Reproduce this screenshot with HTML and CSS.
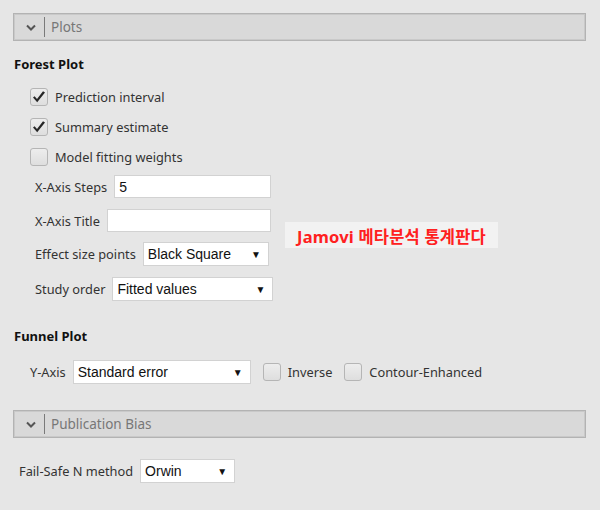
FILE: index.html
```html
<!DOCTYPE html>
<html>
<head>
<meta charset="utf-8">
<link rel="stylesheet" href="styles.css">
</head>
<body>
<div class="header">
  <svg class="chev" width="10" height="7" viewBox="0 0 10 7"><path d="M1 1.5 L5 5.5 L9 1.5" fill="none" stroke="#555" stroke-width="2"/></svg>
  <span class="sep"></span>
  <span class="htitle">Plots</span>
</div>

<div class="stitle first">Forest Plot</div>

<div class="cbrow">
  <span class="cb"><svg width="14" height="14" viewBox="0 0 14 14"><path d="M1 7.6 L5.2 12.2 L13 2.6 L11 1.2 L5 9 L2.6 6.2 Z" fill="#262626"/></svg></span>
  <span class="cblabel">Prediction interval</span>
</div>
<div class="cbrow">
  <span class="cb"><svg width="14" height="14" viewBox="0 0 14 14"><path d="M1 7.6 L5.2 12.2 L13 2.6 L11 1.2 L5 9 L2.6 6.2 Z" fill="#262626"/></svg></span>
  <span class="cblabel">Summary estimate</span>
</div>
<div class="cbrow">
  <span class="cb"></span>
  <span class="cblabel">Model fitting weights</span>
</div>

<div class="frow r1">
  <span class="flabel">X-Axis Steps</span>
  <span class="tinput w-steps">5</span>
</div>
<div class="frow r2">
  <span class="flabel">X-Axis Title</span>
  <span class="tinput w-title"></span>
</div>
<div class="frow r3">
  <span class="flabel">Effect size points</span>
  <span class="sel w-effect">Black Square<span class="arrow">▼</span></span>
</div>
<div class="frow r4">
  <span class="flabel">Study order</span>
  <span class="sel w-order">Fitted values<span class="arrow">▼</span></span>
</div>

<div class="stitle funnel">Funnel Plot</div>

<div class="yrow">
  <span class="flabel">Y-Axis</span>
  <span class="sel w-yaxis">Standard error<span class="arrow">▼</span></span>
  <span class="cb cb-inline"></span>
  <span class="cblabel">Inverse</span>
  <span class="cb cb-inline"></span>
  <span class="cblabel">Contour-Enhanced</span>
</div>

<div class="header header2">
  <svg class="chev" width="10" height="7" viewBox="0 0 10 7"><path d="M1 1.5 L5 5.5 L9 1.5" fill="none" stroke="#555" stroke-width="2"/></svg>
  <span class="sep"></span>
  <span class="htitle">Publication Bias</span>
</div>

<div class="fsrow">
  <span class="flabel">Fail-Safe N method</span>
  <span class="sel w-fs">Orwin<span class="arrow">▼</span></span>
</div>

<div class="watermark">Jamovi 메타분석 통계판다</div>
</body>
</html>
```

FILE: styles.css
```css
html, body {
  margin: 0;
  padding: 0;
}
body {
  background: #e6e6e6;
  width: 600px;
  height: 510px;
  overflow: hidden;
  position: relative;
  font-family: "Noto Sans", "Open Sans", sans-serif;
  font-size: 12.8px;
  color: #333;
  padding-top: 13px;
  box-sizing: border-box;
}
.header {
  margin: 0 14px 0 13px;
  height: 28px;
  box-sizing: border-box;
  border: 1px solid #b3b3b3;
  box-shadow: inset 0 0 0 1px #c9c9c9;
  background: #d9d9d9;
  display: flex;
  align-items: center;
}
.chev {
  margin-left: 12px;
  display: block;
}
.sep {
  width: 1px;
  height: 20px;
  background: #7a7a7a;
  margin-left: 8px;
}
.htitle {
  margin-left: 6px;
  color: #777;
  font-size: 13.5px;
}
.stitle {
  font-weight: bold;
  color: #111;
  margin-left: 14px;
  line-height: 20px;
  font-size: 13px;
}
.stitle.first { margin-top: 13px; }
.cbrow {
  display: flex;
  align-items: center;
  height: 30px;
  padding-left: 30px;
}
.stitle.first + .cbrow { margin-top: 8px; }
.cb {
  width: 18px;
  height: 18px;
  box-sizing: border-box;
  border: 1px solid #b5b5b5;
  border-radius: 3px;
  background: linear-gradient(#ededed, #dedede);
  display: flex;
  align-items: center;
  justify-content: center;
  flex: none;
}
.cblabel {
  margin-left: 7px;
  color: #333;
}
.frow {
  display: flex;
  align-items: center;
  padding-left: 35px;
}
.r1 { margin-top: 3px; }
.r2 { margin-top: 11px; }
.r3 { margin-top: 10px; }
.r4 { margin-top: 11px; }
.flabel {
  color: #333;
  margin-right: 7px;
}
.tinput, .sel {
  height: 23px;
  box-sizing: border-box;
  background: #fff;
  border: 1px solid #d2d2d2;
  font-family: "Liberation Sans", Arial, sans-serif;
  font-size: 14px;
  color: #111;
  display: flex;
  align-items: center;
  padding-left: 4px;
  position: relative;
}
.sel { height: 24px; }
.arrow {
  position: absolute;
  right: 7px;
  top: 50%;
  transform: translateY(-50%);
  font-size: 10px;
  color: #111;
}
.w-steps { width: 157px; }
.w-title { width: 164px; }
.w-effect { width: 126px; }
.w-order { width: 161px; }
.w-yaxis { width: 178px; }
.w-fs { width: 95px; }
.stitle.funnel { margin-top: 25px; }
.yrow {
  display: flex;
  align-items: center;
  padding-left: 30px;
  margin-top: 14px;
}
.yrow .flabel { margin-right: 7px; }
.cb-inline { margin-left: 12px; }
.yrow .cblabel { margin-left: 7px; }
.header2 { margin-top: 26px; }
.fsrow {
  display: flex;
  align-items: center;
  padding-left: 19px;
  margin-top: 21px;
}
.watermark {
  position: absolute;
  left: 285px;
  top: 222px;
  width: 213px;
  height: 26px;
  background: #f2f2f2;
  color: #ff2020;
  font-family: "Noto Sans", "Noto Sans CJK KR", sans-serif;
  font-weight: bold;
  font-size: 16.5px;
  letter-spacing: 0.2px;
  display: flex;
  align-items: center;
  justify-content: center;
  padding-top: 1px;
  box-sizing: border-box;
}
```
